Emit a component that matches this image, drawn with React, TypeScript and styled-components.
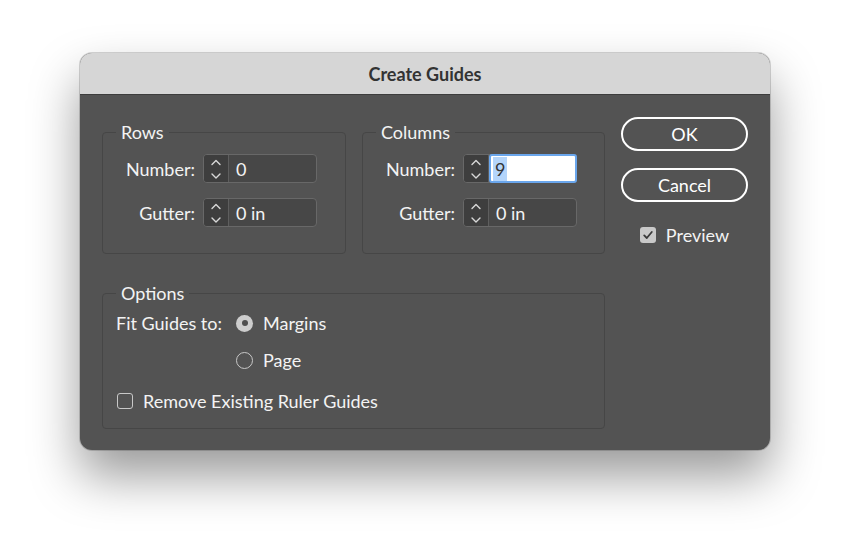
import React from 'react';
import styled, { createGlobalStyle } from 'styled-components';

const GlobalStyle = createGlobalStyle`
  html, body {
    margin: 0;
    padding: 0;
    background: #ffffff;
  }
  body {
    font-family: Lato, 'Liberation Sans', sans-serif;
  }
`;

const Page = styled.div`
  width: 850px;
  height: 556px;
  box-sizing: border-box;
  padding: 53px 0 0 80px;
  overflow: hidden;
`;

const Dialog = styled.div`
  width: 690px;
  height: 397px;
  box-sizing: border-box;
  border-radius: 12px;
  background: #535353;
  box-shadow: 0 0 0 1px rgba(0, 0, 0, 0.16), 0 26px 50px rgba(0, 0, 0, 0.4);
  overflow: hidden;
  display: flex;
  flex-direction: column;
`;

const TitleBar = styled.div`
  height: 41px;
  flex-shrink: 0;
  background: #d6d6d6;
  border-bottom: 1px solid #3d3d3d;
  display: flex;
  align-items: center;
  justify-content: center;
  font-size: 18px;
  font-weight: 700;
  color: #333333;
`;

const Body = styled.div`
  display: flex;
  padding: 22px 22px 0;
  color: #f3f3f3;
  font-size: 18px;
`;

const LeftCol = styled.div`
  width: 503px;
  padding-top: 15px;
  display: flex;
  flex-direction: column;
  gap: 39px;
`;

const TopRow = styled.div`
  display: flex;
  gap: 16px;
`;

const Group = styled.div<{ $width: number }>`
  position: relative;
  width: ${(p) => p.$width}px;
  box-sizing: border-box;
  border: 1px solid #464646;
  border-radius: 4px;
`;

const Legend = styled.span`
  position: absolute;
  top: -12px;
  left: 13px;
  padding: 0 5px;
  background: #535353;
  line-height: 22px;
`;

const FieldGrid = styled.div`
  display: grid;
  grid-template-columns: 73px 114px;
  column-gap: 8px;
  row-gap: 15px;
  align-items: center;
  padding: 21px 0 26px 19px;
`;

const Label = styled.span`
  justify-self: end;
  white-space: nowrap;
`;

const SpinField = styled.div`
  display: flex;
  width: 114px;
  height: 29px;
  box-sizing: border-box;
  border: 1px solid #686868;
  border-radius: 4px;
  background: #474747;
`;

const Stepper = styled.div`
  width: 24px;
  flex-shrink: 0;
  background: #3e3e3e;
  border-right: 1px solid #5e5e5e;
  border-radius: 3px 0 0 3px;
  display: flex;
  align-items: center;
  justify-content: center;
`;

const ValueBox = styled.div<{ $focused?: boolean }>`
  flex: 1;
  display: flex;
  align-items: center;
  padding-left: 7px;
  ${(p) =>
    p.$focused
      ? `
    background: #ffffff;
    color: #333333;
    border: 2px solid #6aa6ec;
    border-radius: 3px;
    margin: -1px -1px -1px 0;
    padding-left: 2px;
  `
      : ''}
`;

const Selected = styled.span`
  background: #b4d5fb;
  padding: 0 2px;
  line-height: 24px;
`;

const FitGrid = styled.div`
  display: grid;
  grid-template-columns: 110px auto;
  column-gap: 10px;
  row-gap: 13px;
  align-items: center;
  padding: 17px 0 15px 13px;
`;

const FitLabel = styled.span`
  white-space: nowrap;
`;

const Choice = styled.div<{ $span?: boolean; $col?: number }>`
  display: flex;
  align-items: center;
  gap: 10px;
  height: 24px;
  white-space: nowrap;
  ${(p) => (p.$span ? 'grid-column: 1 / span 2; margin-top: 4px; padding-left: 1px;' : '')}
  ${(p) => (p.$col ? `grid-column: ${p.$col};` : '')}
`;

const Radio = styled.span<{ $checked?: boolean }>`
  width: 17px;
  height: 17px;
  box-sizing: border-box;
  border-radius: 50%;
  flex-shrink: 0;
  display: flex;
  align-items: center;
  justify-content: center;
  ${(p) =>
    p.$checked
      ? `
    background: #cdcdcd;
    &::after {
      content: '';
      width: 6px;
      height: 6px;
      border-radius: 50%;
      background: #4e4e4e;
    }
  `
      : 'border: 1.5px solid #c8c8c8;'}
`;

const CheckBox = styled.span<{ $checked?: boolean }>`
  width: 16px;
  height: 16px;
  box-sizing: border-box;
  border-radius: 3px;
  flex-shrink: 0;
  display: flex;
  align-items: center;
  justify-content: center;
  ${(p) => (p.$checked ? 'background: #c9c9c9;' : 'border: 1.5px solid #c8c8c8;')}
`;

const RightCol = styled.div`
  width: 127px;
  margin-left: 16px;
  display: flex;
  flex-direction: column;
`;

const PillButton = styled.button<{ $primary?: boolean }>`
  height: 34px;
  box-sizing: border-box;
  border: ${(p) => (p.$primary ? '2.5px' : '2px')} solid #ffffff;
  border-radius: 17px;
  background: transparent;
  color: #ffffff;
  font-family: inherit;
  font-size: 18px;
  padding: 0;
  & + & {
    margin-top: 17px;
  }
`;

const PreviewRow = styled(Choice)`
  align-self: center;
  margin-top: 21px;
`;

const StepIcon = () => (
  <svg width="12" height="24" viewBox="0 0 12 24" fill="none">
    <path d="M2 7.5 L6 3.5 L10 7.5" stroke="#d8d8d8" strokeWidth="1.4" strokeLinecap="round" strokeLinejoin="round" />
    <path d="M2 17 L6 21 L10 17" stroke="#d8d8d8" strokeWidth="1.4" strokeLinecap="round" strokeLinejoin="round" />
  </svg>
);

const CheckMark = () => (
  <svg width="12" height="12" viewBox="0 0 12 12" fill="none">
    <path d="M2.2 6.4 L4.8 9 L9.8 3" stroke="#3a3a3a" strokeWidth="1.8" strokeLinecap="round" strokeLinejoin="round" />
  </svg>
);

const Spin = ({ value, focused }: { value: string; focused?: boolean }) => (
  <SpinField>
    <Stepper>
      <StepIcon />
    </Stepper>
    <ValueBox $focused={focused}>
      {focused ? <Selected>{value}</Selected> : value}
    </ValueBox>
  </SpinField>
);

const App = () => (
  <>
    <GlobalStyle />
    <Page>
      <Dialog>
        <TitleBar>Create Guides</TitleBar>
        <Body>
          <LeftCol>
            <TopRow>
              <Group $width={244}>
                <Legend>Rows</Legend>
                <FieldGrid>
                  <Label>Number:</Label>
                  <Spin value="0" />
                  <Label>Gutter:</Label>
                  <Spin value="0 in" />
                </FieldGrid>
              </Group>
              <Group $width={243}>
                <Legend>Columns</Legend>
                <FieldGrid>
                  <Label>Number:</Label>
                  <Spin value="9" focused />
                  <Label>Gutter:</Label>
                  <Spin value="0 in" />
                </FieldGrid>
              </Group>
            </TopRow>
            <Group $width={503}>
              <Legend>Options</Legend>
              <FitGrid>
                <FitLabel>Fit Guides to:</FitLabel>
                <Choice>
                  <Radio $checked />
                  Margins
                </Choice>
                <Choice $col={2}>
                  <Radio />
                  Page
                </Choice>
                <Choice $span>
                  <CheckBox />
                  Remove Existing Ruler Guides
                </Choice>
              </FitGrid>
            </Group>
          </LeftCol>
          <RightCol>
            <PillButton $primary>OK</PillButton>
            <PillButton>Cancel</PillButton>
            <PreviewRow>
              <CheckBox $checked>
                <CheckMark />
              </CheckBox>
              Preview
            </PreviewRow>
          </RightCol>
        </Body>
      </Dialog>
    </Page>
  </>
);

export default App;
